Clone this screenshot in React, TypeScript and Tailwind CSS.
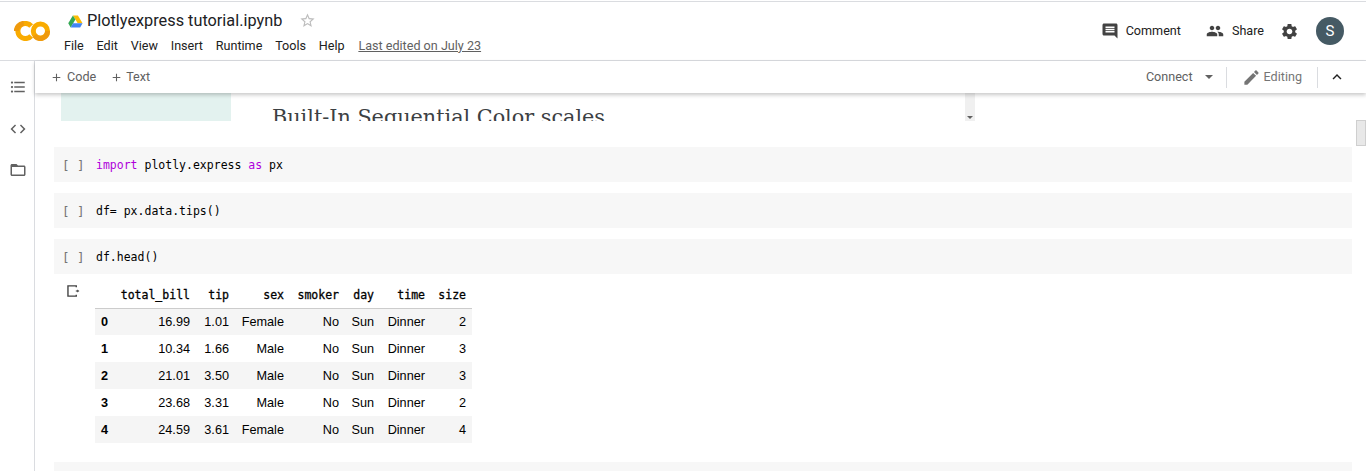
import React from 'react';

const rows = [
  ['0', '16.99', '1.01', 'Female', 'No', 'Sun', 'Dinner', '2'],
  ['1', '10.34', '1.66', 'Male', 'No', 'Sun', 'Dinner', '3'],
  ['2', '21.01', '3.50', 'Male', 'No', 'Sun', 'Dinner', '3'],
  ['3', '23.68', '3.31', 'Male', 'No', 'Sun', 'Dinner', '2'],
  ['4', '24.59', '3.61', 'Female', 'No', 'Sun', 'Dinner', '4'],
];
const columns = ['', 'total_bill', 'tip', 'sex', 'smoker', 'day', 'time', 'size'];
const menu = ['File', 'Edit', 'View', 'Insert', 'Runtime', 'Tools', 'Help'];

function Icon({ d, className }: { d: string; className: string }) {
  return (
    <svg viewBox="0 0 24 24" fill="currentColor" className={className}>
      <path d={d} />
    </svg>
  );
}

const icons = {
  comment: 'M21.99 4c0-1.1-.89-2-1.99-2H4c-1.1 0-2 .9-2 2v12c0 1.1.9 2 2 2h14l4 4-.01-18zM18 14H6v-2h12v2zm0-3H6V9h12v2zm0-3H6V6h12v2z',
  people: 'M16 11c1.66 0 2.99-1.34 2.99-3S17.66 5 16 5c-1.66 0-3 1.34-3 3s1.34 3 3 3zm-8 0c1.66 0 2.99-1.34 2.99-3S9.66 5 8 5C6.34 5 5 6.34 5 8s1.34 3 3 3zm0 2c-2.33 0-7 1.17-7 3.5V19h14v-2.5c0-2.33-4.67-3.5-7-3.5zm8 0c-.29 0-.62.02-.97.05 1.16.84 1.97 1.97 1.97 3.45V19h6v-2.5c0-2.33-4.67-3.5-7-3.5z',
  gear: 'M19.14 12.94c.04-.3.06-.61.06-.94 0-.32-.02-.64-.07-.94l2.03-1.58c.18-.14.23-.41.12-.61l-1.92-3.32c-.12-.22-.37-.29-.59-.22l-2.39.96c-.5-.38-1.03-.7-1.62-.94l-.36-2.54c-.04-.24-.24-.41-.48-.41h-3.84c-.24 0-.43.17-.47.41l-.36 2.54c-.59.24-1.13.57-1.62.94l-2.39-.96c-.22-.08-.47 0-.59.22L2.74 8.87c-.12.21-.08.47.12.61l2.03 1.58c-.05.3-.09.63-.09.94s.02.64.07.94l-2.03 1.58c-.18.14-.23.41-.12.61l1.92 3.32c.12.22.37.29.59.22l2.39-.96c.5.38 1.03.7 1.62.94l.36 2.54c.05.24.24.41.48.41h3.84c.24 0 .44-.17.47-.41l.36-2.54c.59-.24 1.13-.56 1.62-.94l2.39.96c.22.08.47 0 .59-.22l1.92-3.32c.12-.22.07-.47-.12-.61l-2.01-1.58zM12 15.6c-1.98 0-3.6-1.62-3.6-3.6s1.62-3.6 3.6-3.6 3.6 1.62 3.6 3.6-1.62 3.6-3.6 3.6z',
  edit: 'M3 17.25V21h3.75L17.81 9.94l-3.75-3.75L3 17.25zM20.71 7.04c.39-.39.39-1.02 0-1.41l-2.34-2.34c-.39-.39-1.02-.39-1.41 0l-1.83 1.83 3.75 3.75 1.83-1.83z',
  less: 'M12 8l-6 6 1.41 1.41L12 10.83l4.59 4.58L18 14z',
  list: 'M4 10.5c-.83 0-1.5.67-1.5 1.5s.67 1.5 1.5 1.5 1.5-.67 1.5-1.5-.67-1.5-1.5-1.5zm0-6c-.83 0-1.5.67-1.5 1.5S3.17 7.5 4 7.5 5.5 6.83 5.5 6 4.83 4.5 4 4.5zm0 12c-.83 0-1.5.68-1.5 1.5s.68 1.5 1.5 1.5 1.5-.68 1.5-1.5-.67-1.5-1.5-1.5zM7 19h14v-2H7v2zm0-6h14v-2H7v2zm0-8v2h14V5H7z',
  code: 'M9.4 16.6L4.8 12l4.6-4.6L8 6l-6 6 6 6 1.4-1.4zm5.2 0l4.6-4.6-4.6-4.6L16 6l6 6-6 6-1.4-1.4z',
  folder: 'M20 6h-8l-2-2H4c-1.1 0-1.99.9-1.99 2L2 18c0 1.1.9 2 2 2h16c1.1 0 2-.9 2-2V8c0-1.1-.9-2-2-2zm0 12H4V8h16v10z',
  star: 'M22 9.24l-7.19-.62L12 2 9.19 8.63 2 9.24l5.46 4.73L5.82 21 12 17.27 18.18 21l-1.63-7.03L22 9.24zM12 15.4l-3.76 2.27 1-4.28-3.32-2.88 4.38-.38L12 6.1l1.71 4.04 4.38.38-3.32 2.88 1 4.28L12 15.4z',
  plus: 'M19 13h-6v6h-2v-6H5v-2h6V5h2v6h6v2z',
};

function ColabLogo() {
  return (
    <svg viewBox="0 0 36 20" className="w-[36px] h-[20px]" fill="none">
      <path d="M17.2 5 A7.6 7.6 0 1 0 17.2 15" stroke="#f9ab00" strokeWidth="5" />
      <circle cx="26.4" cy="10" r="7.1" stroke="#f9ab00" strokeWidth="5" />
      <path d="M20.6 14.4 A7.1 7.1 0 0 0 33.5 10" stroke="#ef9a0c" strokeWidth="5" />
      <path d="M9.8 2.4 A7.6 7.6 0 0 0 2.3 10" stroke="#ef9a0c" strokeWidth="5" />
    </svg>
  );
}

function DriveLogo() {
  return (
    <svg viewBox="0 0 16 14" className="w-[15px] h-[13px]">
      <polygon points="5.2,0.5 10.6,0.5 15.6,9 10.4,9" fill="#fbbc04" />
      <polygon points="5.2,0.5 0.2,9 2.8,13.5 7.9,4.8" fill="#34a853" />
      <polygon points="5.4,9 15.6,9 13,13.5 2.8,13.5" fill="#4285f4" />
    </svg>
  );
}

function OutputIcon() {
  return (
    <svg viewBox="0 0 14 13" className="w-[13px] h-[12px]" fill="none" stroke="#424242">
      <path d="M10 2.5 V1 H1 V12 H10 V10.5" strokeWidth="1.5" />
      <path d="M9.5 6.5 H11.5" strokeWidth="1.2" />
      <polygon points="11,4.9 13.4,6.5 11,8.1" fill="#424242" stroke="none" />
    </svg>
  );
}

function Cell({ children }: { children: React.ReactNode }) {
  return (
    <div className="h-[35px] bg-[#f7f7f7] flex items-center mr-[14px] font-['DejaVu_Sans_Mono',monospace] text-[11.5px] text-black">
      <span className="w-[42px] pl-[8px] pt-[3px] text-[#757575] whitespace-pre text-[12.5px]">[ ]</span>
      <span className="whitespace-pre pt-[3px]">{children}</span>
    </div>
  );
}

export default function App() {
  return (
    <div className="h-[471px] w-[1366px] overflow-hidden bg-white flex flex-col font-['Roboto',sans-serif] relative">
      {/* Header */}
      <div className="mt-px border-t border-[#dadce0] h-[59px] shrink-0 flex items-center text-[#212121]">
        <div className="w-[64px] pl-[14px] flex items-center">
          <ColabLogo />
        </div>
        <div className="flex flex-col">
          <div className="flex items-center ml-[4px] h-[26px] mt-[4px]">
            <DriveLogo />
            <span className="ml-[4px] text-[16.3px] text-[#202124]">Plotlyexpress tutorial.ipynb</span>
            <Icon d={icons.star} className="ml-[17px] w-[17px] h-[17px] -mt-[1px] text-[#bdbdbd]" />
          </div>
          <div className="flex items-center text-[12.6px] h-[24px]">
            {menu.map((item) => (
              <span key={item} className="mr-[12.8px]">{item}</span>
            ))}
            <span className="ml-[1px] text-[#616161] underline">Last edited on July 23</span>
          </div>
        </div>
        <div className="ml-auto flex items-center pr-[22px] text-[12.6px]">
          <Icon d={icons.comment} className="w-[18px] h-[18px] text-[#424242]" />
          <span className="ml-[7px]">Comment</span>
          <Icon d={icons.people} className="ml-[25px] w-[18px] h-[18px] text-[#424242]" />
          <span className="ml-[8px]">Share</span>
          <Icon d={icons.gear} className="ml-[16px] w-[19px] h-[19px] text-[#424242]" />
          <div className="ml-[17px] w-[28px] h-[28px] rounded-full bg-[#455a64] text-white flex items-center justify-center text-[15px]">S</div>
        </div>
      </div>

      <div className="flex flex-1 min-h-0 border-t border-[#dadce0]">
        {/* Sidebar */}
        <div className="w-[35px] shrink-0 border-r border-[#dadce0] flex flex-col items-center pt-[17px] pl-[1px] gap-[23.5px] text-[#616161]">
          <Icon d={icons.list} className="w-[18px] h-[18px]" />
          <Icon d={icons.code} className="w-[18px] h-[18px]" />
          <Icon d={icons.folder} className="w-[18px] h-[18px]" />
        </div>

        <div className="flex-1 min-w-0 flex flex-col">
          {/* Toolbar */}
          <div className="relative z-10 h-[32px] shrink-0 bg-white shadow-[0_2px_4px_rgba(0,0,0,0.22)] flex items-center text-[12.6px] text-[#616161]">
            <Icon d={icons.plus} className="ml-[15px] w-[13px] h-[13px]" />
            <span className="ml-[4px]">Code</span>
            <Icon d={icons.plus} className="ml-[14px] w-[13px] h-[13px]" />
            <span className="ml-[3px]">Text</span>
            <div className="ml-auto flex items-center pr-[20px]">
              <span>Connect</span>
              <span className="ml-[12px] w-0 h-0 border-x-[4px] border-x-transparent border-t-[4px] border-t-[#616161]" />
              <span className="ml-[13px] w-px h-[21px] bg-[#dadce0]" />
              <Icon d={icons.edit} className="ml-[15px] w-[19px] h-[19px] text-[#757575]" />
              <span className="ml-[3px] text-[#757575]">Editing</span>
              <span className="ml-[15px] w-px h-[21px] bg-[#dadce0]" />
              <Icon d={icons.less} className="ml-[10px] w-[18px] h-[18px] text-[#212121]" />
            </div>
          </div>

          {/* Notebook */}
          <div className="flex-1 min-h-0 overflow-hidden">
            <div className="flex h-[28px] overflow-hidden">
              <div className="ml-[26px] w-[170px] bg-[#e3f2ef]" />
              <div className="ml-[41px] w-[693px] pt-[10px] font-['DejaVu_Serif',serif] text-[20.75px] leading-[28px] text-[#3c4043] whitespace-nowrap">
                Built-In Sequential Color scales
              </div>
              <div className="w-[10px] bg-[#f0f0f0] flex items-end justify-center pb-[2px]">
                <span className="w-0 h-0 border-x-[3px] border-x-transparent border-t-[3px] border-t-[#616161]" />
              </div>
            </div>

            <div className="ml-[19px] mt-[26px] flex flex-col gap-[11px]">
              <Cell>
                <span className="text-[#af00db]">import</span> plotly.express <span className="text-[#af00db]">as</span> px
              </Cell>
              <Cell>df= px.data.tips()</Cell>
              <Cell>df.head()</Cell>
            </div>

            <div className="flex ml-[32px] mt-[9px]">
              <div className="w-[28px] pt-[2px]">
                <OutputIcon />
              </div>
              <table className="table-fixed w-[377px] border-collapse text-[12.7px] font-['Liberation_Sans',sans-serif] text-black">
                <colgroup>
                  <col className="w-[20px]" />
                  <col className="w-[81px]" />
                  <col className="w-[39px]" />
                  <col className="w-[55px]" />
                  <col className="w-[55px]" />
                  <col className="w-[35px]" />
                  <col className="w-[51px]" />
                  <col className="w-[41px]" />
                </colgroup>
                <thead>
                  <tr className="h-[25px] border-b border-[#cccccc]">
                    {columns.map((c) => (
                      <th key={c} className="pr-[6px] text-right font-['DejaVu_Sans_Mono',monospace] text-[11.5px] font-normal [-webkit-text-stroke:0.3px_black] whitespace-nowrap">{c}</th>
                    ))}
                  </tr>
                </thead>
                <tbody>
                  {rows.map((r) => (
                    <tr key={r[0]} className="h-[27px] odd:bg-[#f5f5f5]">
                      {r.map((v, i) => (
                        <td key={i} className={i === 0 ? 'pl-[6px] pt-[2px] font-bold' : 'pr-[6px] pt-[2px] text-right whitespace-nowrap'}>{v}</td>
                      ))}
                    </tr>
                  ))}
                </tbody>
              </table>
            </div>

            <div className="ml-[19px] mr-[14px] mt-[19px] h-[40px] bg-[#f7f7f7]" />
          </div>
        </div>
      </div>

      {/* scrollbar thumb */}
      <div className="absolute left-[1356px] top-[120px] w-[10px] h-[26px] bg-[#e8e8e8] border border-[#cfcfcf]" />
    </div>
  );
}
